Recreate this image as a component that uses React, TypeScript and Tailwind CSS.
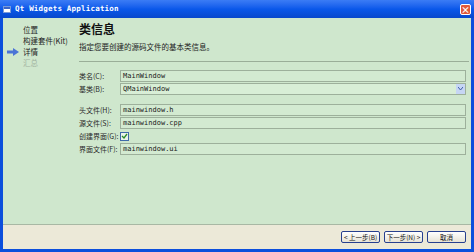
const cjk = "font-['Noto_Sans_CJK_SC','Noto_Sans',sans-serif]"
const mono = "font-['DejaVu_Sans_Mono','Liberation_Mono',monospace]"

function Label({ text }: { text: string }) {
  return <div className="w-[41px] whitespace-nowrap text-[7px] leading-none text-[#2a2a2a]">{text}</div>
}

function Field({ label, value }: { label: string; value: string }) {
  return (
    <div className="flex items-center h-[12px]">
      <Label text={label} />
      <div className={`flex-1 h-[12px] border border-[#9db09b] bg-[#d3ead1] px-[2px] text-[7px] leading-[10px] text-[#1a1a1a] ${mono}`}>
        {value}
      </div>
    </div>
  )
}

function NavItem({ text, active, dim }: { text: string; active?: boolean; dim?: boolean }) {
  return (
    <div className="flex items-center h-[11px]">
      <div className="w-[20px] flex justify-center">
        {active && (
          <svg width="12" height="8" viewBox="0 0 12 8">
            <path d="M0 2.5h6V0l6 4-6 4V5.5H0z" fill="#4b74d6" />
          </svg>
        )}
      </div>
      <span className={`whitespace-nowrap text-[7.5px] leading-none ${dim ? 'text-[#9fb29e]' : 'text-[#222]'}`}>{text}</span>
    </div>
  )
}

function Btn({ children }: { children: React.ReactNode }) {
  return (
    <div className="w-[39px] h-[12px] rounded-[2px] border border-[#27408f] bg-gradient-to-b from-white to-[#e6e3d6] flex items-center justify-center whitespace-nowrap text-[6.5px] leading-none text-[#111]">
      {children}
    </div>
  )
}

export default function App() {
  return (
    <div className={`w-[474px] h-[252px] bg-[#0c4fdc] flex flex-col ${cjk}`}>
      <div className="h-[18px] flex items-center bg-gradient-to-b from-[#3b7cf5] via-[#0a58ea] to-[#0848cc] px-[3px]">
        <div className="w-[8px] h-[7px] bg-white border border-[#7a9ad8] mr-[4px]">
          <div className="h-[2px] bg-[#3a64c8]" />
        </div>
        <span className={`text-white font-bold text-[7.5px] ${mono} tracking-[0.2px]`}>Qt Widgets Application</span>
        <div className="ml-auto w-[11px] h-[11px] rounded-[2px] bg-[#e2583a] border border-white flex items-center justify-center text-white text-[9px] font-bold leading-none">×</div>
      </div>
      <div className="flex-1 mx-[3px] mb-[3px] flex flex-col bg-[#cfe7cd]">
        <div className="flex-1 flex">
          <div className="w-[76px] pt-[6px] flex flex-col">
            <NavItem text="位置" />
            <NavItem text="构建套件(Kit)" />
            <NavItem text="详情" active />
            <NavItem text="汇总" dim />
          </div>
          <div className="flex-1 pr-[5px] flex flex-col">
            <div className="pt-[3px] text-[12px] font-bold leading-[16px] text-[#111]">类信息</div>
            <div className="mt-[5px] text-[7.5px] leading-[10px] text-[#222]">指定您要创建的源码文件的基本类信息。</div>
            <div className="mt-[9px] border-t border-[#9aae98] mr-[-3px]" />
            <div className="mt-[8px] flex flex-col gap-[1px]">
              <Field label="类名(C):" value="MainWindow" />
              <div className="flex items-center h-[12px]">
                <Label text="基类(B):" />
                <div className={`flex-1 h-[12px] border border-[#9db09b] bg-[#d8eed6] pl-[2px] flex items-center text-[7px] text-[#1a1a1a] ${mono}`}>
                  <span className="flex-1">QMainWindow</span>
                  <div className="w-[9px] h-[10px] bg-[#c6d6f4] flex items-center justify-center">
                    <svg width="5" height="4" viewBox="0 0 5 4"><path d="M0 0l2.5 3L5 0" stroke="#3d5da8" fill="none" /></svg>
                  </div>
                </div>
              </div>
            </div>
            <div className="mt-[9px] flex flex-col gap-[1px]">
              <Field label="头文件(H):" value="mainwindow.h" />
              <Field label="源文件(S):" value="mainwindow.cpp" />
              <div className="flex items-center h-[12px]">
                <Label text="创建界面(G):" />
                <div className="w-[9px] h-[9px] border border-[#3f6aa8] bg-[#e9f3e8] flex items-center justify-center">
                  <svg width="7" height="6" viewBox="0 0 7 6"><path d="M1 3l2 2 3-4" stroke="#2a8a2a" strokeWidth="1.3" fill="none" /></svg>
                </div>
              </div>
              <Field label="界面文件(F):" value="mainwindow.ui" />
            </div>
          </div>
        </div>
        <div className="h-[25px] border-t border-[#a8b8a4] bg-[#ece9d8] flex items-center justify-end gap-[4px] pr-[5px]">
          <Btn>&lt; 上一步(B)</Btn>
          <Btn>下一步(N) &gt;</Btn>
          <Btn>取消</Btn>
        </div>
      </div>
    </div>
  )
}
